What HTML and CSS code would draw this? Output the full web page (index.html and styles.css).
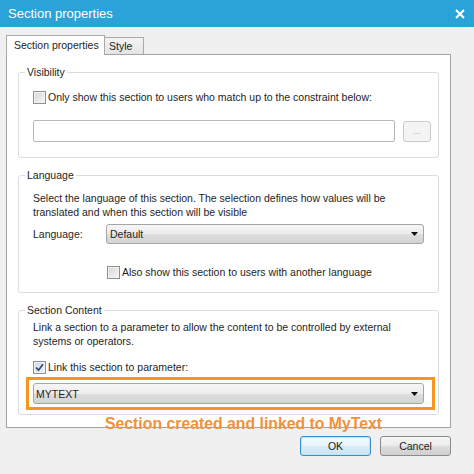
FILE: index.html
```html
<!DOCTYPE html>
<html>
<head>
<meta charset="utf-8">
<link rel="stylesheet" href="styles.css">
</head>
<body>
<div class="window">
  <header class="titlebar">
    <span class="title">Section properties</span>
    <svg class="close" width="10" height="10" viewBox="0 0 10 10"><path d="M1 1L9 9M9 1L1 9" stroke="#fff" stroke-width="2" fill="none"/></svg>
  </header>
  <div class="client">
    <div class="tabs">
      <div class="tab active">Section properties</div>
      <div class="tab inactive">Style</div>
    </div>
    <div class="panel">
      <fieldset class="group">
        <legend>Visibility</legend>
        <div class="body vis-body">
          <div class="check-row">
            <span class="cb"></span>
            <span>Only show this section to users who match up to the constraint below:</span>
          </div>
          <div class="input-row">
            <div class="textbox"></div>
            <div class="btn-small">...</div>
          </div>
        </div>
      </fieldset>
      <fieldset class="group">
        <legend>Language</legend>
        <div class="body lang-body">
          <p class="desc">Select the language of this section. The selection defines how values will be<br>translated and when this section will be visible</p>
          <div class="field-row">
            <span class="field-label">Language:</span>
            <div class="combo">
              <span>Default</span>
              <svg class="arrow" width="7" height="4" viewBox="0 0 7 4"><path d="M0 0H7L3.5 4Z" fill="#111"/></svg>
            </div>
          </div>
          <div class="check-row indented">
            <span class="cb"></span>
            <span>Also show this section to users with another language</span>
          </div>
        </div>
      </fieldset>
      <fieldset class="group last">
        <legend>Section Content</legend>
        <div class="body content-body">
          <p class="desc">Link a section to a parameter to allow the content to be controlled by external<br>systems or operators.</p>
          <div class="check-row link-row">
            <span class="cb checked"><svg width="11" height="11" viewBox="0 0 11 11"><path d="M2 5.5L4.5 8.2L9 2.2" stroke="#2c4d84" stroke-width="1.8" fill="none"/></svg></span>
            <span>Link this section to parameter:</span>
          </div>
          <div class="highlight">
            <div class="combo tall">
              <span>MYTEXT</span>
              <svg class="arrow" width="7" height="4" viewBox="0 0 7 4"><path d="M0 0H7L3.5 4Z" fill="#111"/></svg>
            </div>
          </div>
        </div>
      </fieldset>
    </div>
    <div class="buttons">
      <div class="btn default">OK</div>
      <div class="btn">Cancel</div>
    </div>
  </div>
  <div class="annotation">Section created and linked to MyText</div>
</div>
</body>
</html>
```
FILE: styles.css
```css
html, body {
  margin: 0;
  padding: 0;
}
body {
  width: 474px;
  height: 474px;
  overflow: hidden;
  background: #f0f0f0;
  font-family: "Liberation Sans", Arial, sans-serif;
  font-size: 10.5px;
  color: #1e1e1e;
}
.window {
  position: relative;
  height: 474px;
}
.titlebar {
  height: 27px;
  background: #29a3d8;
  display: flex;
  align-items: center;
  justify-content: space-between;
  padding: 0 9px 0 8px;
  color: #fff;
  font-size: 13px;
}
.title {
  line-height: 16px;
  padding-top: 1px;
}
.close {
  display: block;
}
.client {
  padding: 8px 23px 0 6px;
}
.tabs {
  display: flex;
  align-items: flex-end;
  height: 19px;
}
.tab {
  box-sizing: border-box;
  border: 1px solid #a9a9a9;
  border-bottom: none;
  white-space: nowrap;
}
.tab.active {
  width: 99px;
  height: 20px;
  margin-bottom: -1px;
  background: #fff;
  padding-left: 7px;
  line-height: 18px;
  position: relative;
  z-index: 1;
}
.tab.inactive {
  width: 39px;
  height: 17px;
  border-left: none;
  background: linear-gradient(#f4f4f4, #e4e4e4);
  padding-left: 4px;
  line-height: 16px;
}
.panel {
  box-sizing: border-box;
  width: 445px;
  height: 374px;
  background: #fff;
  border: 1px solid #a3a3a3;
  padding: 10px 11px 0;
}
.group {
  margin: 0 0 10px;
  padding: 0;
  border: 1px solid #d9dde1;
  border-radius: 3px;
  min-width: 0;
}
.group.last {
  margin-bottom: 0;
}
.group legend {
  margin-left: 6px;
  padding: 0 2px;
  line-height: 14px;
}
.body {
  padding-left: 14px;
}
.vis-body {
  padding: 11px 7px 15px 14px;
}
.lang-body {
  padding: 9px 14px 13px 14px;
}
.content-body {
  padding: 3px 14px 4px 14px;
}
.desc {
  margin: 0;
  line-height: 14px;
  white-space: nowrap;
}
.check-row {
  display: flex;
  align-items: center;
  height: 14px;
  white-space: nowrap;
}
.check-row.indented {
  margin-top: 21px;
  padding-left: 74px;
}
.check-row.link-row {
  margin-top: 12px;
}
.cb {
  box-sizing: border-box;
  width: 13px;
  height: 13px;
  margin-right: 2px;
  border: 1px solid #8e8f8f;
  background: linear-gradient(135deg, #d6d6d6, #f7f7f7);
  box-shadow: inset 0 0 0 1px #f3f3f3;
  display: flex;
  align-items: center;
  justify-content: center;
  flex: none;
}
.cb.checked {
  background: linear-gradient(135deg, #cfd9e6, #f2f5f9);
}
.cb svg {
  display: block;
}
.input-row {
  display: flex;
  align-items: center;
  margin-top: 16px;
}
.textbox {
  flex: 1;
  box-sizing: border-box;
  height: 22px;
  border: 1px solid #b5b7bb;
  border-radius: 2px;
  background: #fff;
}
.btn-small {
  box-sizing: border-box;
  width: 28px;
  height: 21px;
  margin-left: 8px;
  border: 1px solid #cacaca;
  border-radius: 3px;
  background: #f4f4f4;
  color: #a8a8a8;
  font-size: 9px;
  display: flex;
  align-items: center;
  justify-content: center;
}
.field-row {
  display: flex;
  align-items: center;
  margin-top: 5px;
}
.field-label {
  width: 73px;
  flex: none;
}
.combo {
  flex: 1;
  box-sizing: border-box;
  height: 20px;
  border: 1px solid #a6a6a6;
  border-radius: 3px;
  background: linear-gradient(#f6f6f6 0%, #ececec 50%, #dedede 51%, #d4d4d4 100%);
  display: flex;
  align-items: center;
  justify-content: space-between;
  padding: 0 5px 0 3px;
}
.combo.tall {
  height: 21px;
  padding-left: 2px;
}
.arrow {
  display: block;
}
.highlight {
  margin: 3px -11px 0 -7px;
  border: 3px solid #f6951f;
  padding: 3px 8px 3px 4px;
  display: flex;
}
.buttons {
  display: flex;
  justify-content: flex-end;
  gap: 9px;
  margin-top: 8px;
}
.btn {
  box-sizing: border-box;
  width: 71px;
  height: 20px;
  border: 1px solid #8b8b8b;
  border-radius: 3px;
  background: linear-gradient(#f6f6f6 0%, #ebebeb 50%, #dddddd 51%, #d0d0d0 100%);
  display: flex;
  align-items: center;
  justify-content: center;
  color: #1a1a1a;
}
.btn.default {
  border-color: #3c8fc6;
  box-shadow: inset 0 0 0 1px #bfe3f7;
  background: linear-gradient(#f3f9fd 0%, #e8f4fb 50%, #d7ecf8 51%, #cbe4f3 100%);
}
.annotation {
  position: absolute;
  left: 105px;
  top: 415px;
  font-size: 15.8px;
  font-weight: bold;
  line-height: 18px;
  color: #f0913b;
  white-space: nowrap;
}
```
